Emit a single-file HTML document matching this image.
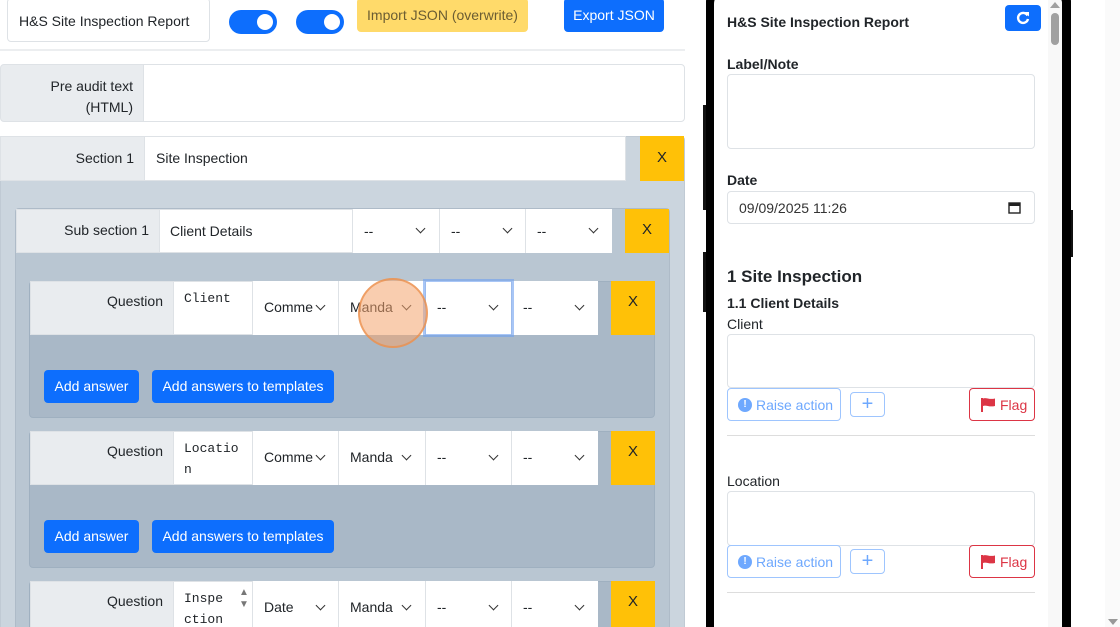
<!DOCTYPE html>
<html><head><meta charset="utf-8"><style>
*{box-sizing:border-box;margin:0;padding:0}
html,body{width:1120px;height:627px;overflow:hidden}
body{background:#fff;font-family:"Liberation Sans",sans-serif;font-size:14px;color:#212529}
#w{position:relative;width:1120px;height:627px;overflow:hidden}
.a{position:absolute}
.lbl{background:#e9ecef;text-align:right;padding-right:10px;border:1px solid #dee2e6;color:#212529}
.inp{background:#fff;border:1px solid #dee2e6}
.sel{background:#fff;border-left:1px solid #dee2e6;padding-left:11px;line-height:52px;overflow:hidden;white-space:nowrap;padding-right:30px}
.sel:after{content:"";position:absolute;right:15px;top:21px;width:6px;height:6px;border-right:1.5px solid #333;border-bottom:1.5px solid #333;transform:rotate(45deg)}
.s44:after{top:16px}
.x{background:#ffc107;text-align:center;color:#212529;font-size:15px}
.btn{background:#0d6efd;color:#fff;border-radius:4px;text-align:center;font-size:14px}
.mono{font-family:"Liberation Mono",monospace;font-size:13px;padding:8px 10px;line-height:21px}
.pb{border:1px solid #9ec5fe;border-radius:4px;color:#6ea8fe;display:flex;align-items:center}
.ic{display:inline-block;width:14px;height:14px;border-radius:50%;background:#6ea8fe;color:#fff;font-size:10px;text-align:center;line-height:14px;font-weight:bold;margin-right:4px}
.flag{border:1px solid #dc3545;border-radius:4px;color:#dc3545;display:flex;align-items:center;padding-left:10px}
</style></head><body><div id="w">
<div class="a inp" style="left:7px;top:-2px;width:203px;height:44px;border-radius:4px;padding:14px 0 0 11px;font-size:14px">H&amp;S Site Inspection Report</div>
<div class="a" style="left:229px;top:10px;width:48px;height:24px;border-radius:12px;background:#0d6efd"><div class="a" style="right:4px;top:4px;width:16px;height:16px;border-radius:50%;background:#fff"></div></div>
<div class="a" style="left:296px;top:10px;width:48px;height:24px;border-radius:12px;background:#0d6efd"><div class="a" style="right:4px;top:4px;width:16px;height:16px;border-radius:50%;background:#fff"></div></div>
<div class="a" style="left:357px;top:-2px;width:171px;height:34px;border-radius:4px;background:#ffda6a;color:#6b5d33;text-align:center;line-height:34px;font-size:14px">Import JSON (overwrite)</div>
<div class="a btn" style="left:564px;top:-2px;width:100px;height:34px;line-height:34px">Export JSON</div>
<div class="a" style="left:0;top:49px;width:685px;height:2px;background:#eceef0"></div>
<div class="a lbl" style="left:0;top:64px;width:144px;height:58px;border-radius:4px 0 0 4px;padding-top:11px;line-height:21px">Pre audit text<br>(HTML)</div>
<div class="a inp" style="left:143px;top:64px;width:542px;height:58px;border-radius:0 4px 4px 0"></div>
<div class="a" style="left:0;top:136px;width:685px;height:491px;background:#cbd5de;border:1px solid #c0cad4;border-bottom:0;border-radius:4px 4px 0 0"></div>
<div class="a lbl" style="left:0;top:136px;width:145px;height:45px;line-height:42px">Section 1</div>
<div class="a inp" style="left:144px;top:136px;width:482px;height:45px;padding-left:11px;line-height:43px">Site Inspection</div>
<div class="a x" style="left:640px;top:136px;width:44px;height:45px;line-height:43px">X</div>
<div class="a" style="left:15px;top:208px;width:655px;height:419px;background:#b9c6d2;border:1px solid #aebbc8;border-bottom:0;border-radius:4px 4px 0 0"></div>
<div class="a lbl" style="left:16px;top:209px;width:144px;height:44px;line-height:40px">Sub section 1</div>
<div class="a inp" style="left:159px;top:209px;width:194px;height:44px;padding-left:10px;line-height:42px">Client Details</div>
<div class="a sel s44" style="left:352px;top:209px;width:87px;height:44px;line-height:44px">--</div>
<div class="a sel s44" style="left:439px;top:209px;width:87px;height:44px;line-height:44px">--</div>
<div class="a sel s44" style="left:525px;top:209px;width:87px;height:44px;line-height:44px">--</div>
<div class="a x" style="left:625px;top:209px;width:44px;height:44px;line-height:42px">X</div>

<div class="a" style="left:29px;top:281px;width:626px;height:137px;background:#a9b8c7;border:1px solid #9fb0c0;border-radius:4px"></div>
<div class="a lbl" style="left:30px;top:281px;width:144px;height:54px;padding-top:11px">Question</div>
<div class="a inp mono" style="left:173px;top:281px;width:80px;height:54px;padding-top:6px">Client</div>
<div class="a sel" style="left:252px;top:281px;width:87px;height:54px">Comme</div>
<div class="a sel" style="left:338px;top:281px;width:87px;height:54px">Manda</div>
<div class="a sel" style="left:425px;top:281px;width:87px;height:54px">--</div>
<div class="a sel" style="left:511px;top:281px;width:87px;height:54px">--</div>
<div class="a x" style="left:611px;top:281px;width:44px;height:54px;line-height:42px">X</div>
<div class="a" style="left:423px;top:279px;width:91px;height:58px;border:3px solid rgba(110,160,240,.6)"></div>
<div class="a" style="left:358px;top:278px;width:70px;height:70px;border-radius:50%;background:rgba(244,164,110,.55);border:2px solid rgba(235,140,70,.7)"></div>
<div class="a btn" style="left:44px;top:370px;width:95px;height:33px;line-height:33px">Add answer</div>
<div class="a btn" style="left:152px;top:370px;width:182px;height:33px;line-height:33px">Add answers to templates</div>

<div class="a" style="left:29px;top:431px;width:626px;height:137px;background:#a9b8c7;border:1px solid #9fb0c0;border-radius:4px"></div>
<div class="a lbl" style="left:30px;top:431px;width:144px;height:54px;padding-top:11px">Question</div>
<div class="a inp mono" style="left:173px;top:431px;width:80px;height:54px;padding-top:6px">Locatio<br>n</div>
<div class="a sel" style="left:252px;top:431px;width:87px;height:54px">Comme</div>
<div class="a sel" style="left:338px;top:431px;width:87px;height:54px">Manda</div>
<div class="a sel" style="left:425px;top:431px;width:87px;height:54px">--</div>
<div class="a sel" style="left:511px;top:431px;width:87px;height:54px">--</div>
<div class="a x" style="left:611px;top:431px;width:44px;height:54px;line-height:42px">X</div>
<div class="a btn" style="left:44px;top:520px;width:95px;height:33px;line-height:33px">Add answer</div>
<div class="a btn" style="left:152px;top:520px;width:182px;height:33px;line-height:33px">Add answers to templates</div>

<div class="a" style="left:29px;top:581px;width:626px;height:46px;background:#a9b8c7;border:1px solid #9fb0c0;border-bottom:0;border-radius:4px 4px 0 0"></div>
<div class="a lbl" style="left:30px;top:581px;width:144px;height:46px;padding-top:11px;border-bottom:0">Question</div>
<div class="a inp mono" style="left:173px;top:581px;width:80px;height:46px;padding-top:6px;border-bottom:0;overflow:hidden">Inspe<br>ction</div>
<div class="a" style="left:239px;top:587px;color:#777;font-size:10px;line-height:12px">▲<br>▼</div>
<div class="a sel" style="left:252px;top:581px;width:87px;height:46px">Date</div>
<div class="a sel" style="left:338px;top:581px;width:87px;height:46px">Manda</div>
<div class="a sel" style="left:425px;top:581px;width:87px;height:46px">--</div>
<div class="a sel" style="left:511px;top:581px;width:87px;height:46px">--</div>
<div class="a x" style="left:611px;top:581px;width:44px;height:46px;line-height:42px">X</div>

<div class="a" style="left:703px;top:105px;width:4px;height:105px;background:#111"></div>
<div class="a" style="left:703px;top:252px;width:4px;height:60px;background:#111"></div>
<div class="a" style="left:1070px;top:210px;width:3px;height:47px;background:#111"></div>
<div class="a" style="left:706px;top:-20px;width:365px;height:647px;background:#000;border-radius:22px 22px 0 0"></div>
<div class="a" style="left:714px;top:-10px;width:348px;height:637px;background:#fff;border-radius:14px 14px 0 0;overflow:hidden">
 <div class="a" style="left:334px;top:10px;width:14px;height:627px;background:#f8f8f8"></div>
 <div class="a" style="left:337px;top:23px;width:8px;height:32px;background:#a0a0a0;border-radius:4px"></div>
 <div class="a" style="left:336px;top:12px;width:0;height:0;border-left:5px solid transparent;border-right:5px solid transparent;border-bottom:6px solid #a0a0a0"></div>
</div>
<div class="a" style="left:727px;top:14px;font-weight:bold;font-size:14px">H&amp;S Site Inspection Report</div>
<div class="a btn" style="left:1005px;top:5px;width:36px;height:26px"><svg width="16" height="16" viewBox="0 0 16 16" style="margin-top:5px"><path d="M12.5 5.5A5 5 0 1 0 13 9" fill="none" stroke="#fff" stroke-width="2.4"/><path d="M9.5 2h4.5v4.5z" fill="#fff"/></svg></div>
<div class="a" style="left:727px;top:56px;font-weight:bold;font-size:14px">Label/Note</div>
<div class="a inp" style="left:727px;top:74px;width:308px;height:75px;border-radius:4px"></div>
<div class="a" style="left:727px;top:172px;font-weight:bold;font-size:14px">Date</div>
<div class="a inp" style="left:727px;top:191px;width:308px;height:33px;border-radius:4px;padding:8px 0 0 11px;color:#333">09/09/2025 11:26</div>
<svg class="a" style="left:1008px;top:201px" width="13" height="13" viewBox="0 0 13 13"><rect x="1" y="2" width="11" height="10" fill="none" stroke="#222" stroke-width="1.4"/><rect x="1" y="2" width="11" height="3" fill="#222"/></svg>
<div class="a" style="left:727px;top:267px;font-weight:bold;font-size:17px">1 Site Inspection</div>
<div class="a" style="left:727px;top:295px;font-weight:bold;font-size:14px">1.1 Client Details</div>
<div class="a" style="left:727px;top:316px;font-size:14px">Client</div>
<div class="a inp" style="left:727px;top:334px;width:308px;height:54px;border-radius:4px"></div>
<div class="a pb" style="left:727px;top:388px;width:114px;height:33px;padding-left:10px"><span class="ic">!</span>Raise action</div>
<div class="a pb" style="left:850px;top:392px;width:35px;height:25px;justify-content:center;font-size:20px">+</div>
<div class="a flag" style="left:969px;top:388px;width:66px;height:33px"><svg width="16" height="15" viewBox="0 0 16 15" style="margin-right:4px"><rect x="1" y="1" width="2" height="14" fill="#dc3545"/><path d="M3 1.5C6 0 9 3 15 1.5V9C9 10.5 6 7.5 3 9z" fill="#dc3545"/></svg>Flag</div>
<div class="a" style="left:727px;top:435px;width:308px;height:1px;background:#ddd"></div>
<div class="a" style="left:727px;top:473px;font-size:14px">Location</div>
<div class="a inp" style="left:727px;top:491px;width:308px;height:55px;border-radius:4px"></div>
<div class="a pb" style="left:727px;top:545px;width:114px;height:33px;padding-left:10px"><span class="ic">!</span>Raise action</div>
<div class="a pb" style="left:850px;top:549px;width:35px;height:25px;justify-content:center;font-size:20px">+</div>
<div class="a flag" style="left:969px;top:545px;width:66px;height:33px"><svg width="16" height="15" viewBox="0 0 16 15" style="margin-right:4px"><rect x="1" y="1" width="2" height="14" fill="#dc3545"/><path d="M3 1.5C6 0 9 3 15 1.5V9C9 10.5 6 7.5 3 9z" fill="#dc3545"/></svg>Flag</div>
<div class="a" style="left:727px;top:592px;width:308px;height:1px;background:#ddd"></div>
<div class="a" style="left:1105px;top:0;width:15px;height:627px;background:#fafafa"></div>
<div class="a" style="left:1108px;top:619px;border-left:5px solid transparent;border-right:5px solid transparent;border-top:6px solid #999"></div>
</div></body></html>
